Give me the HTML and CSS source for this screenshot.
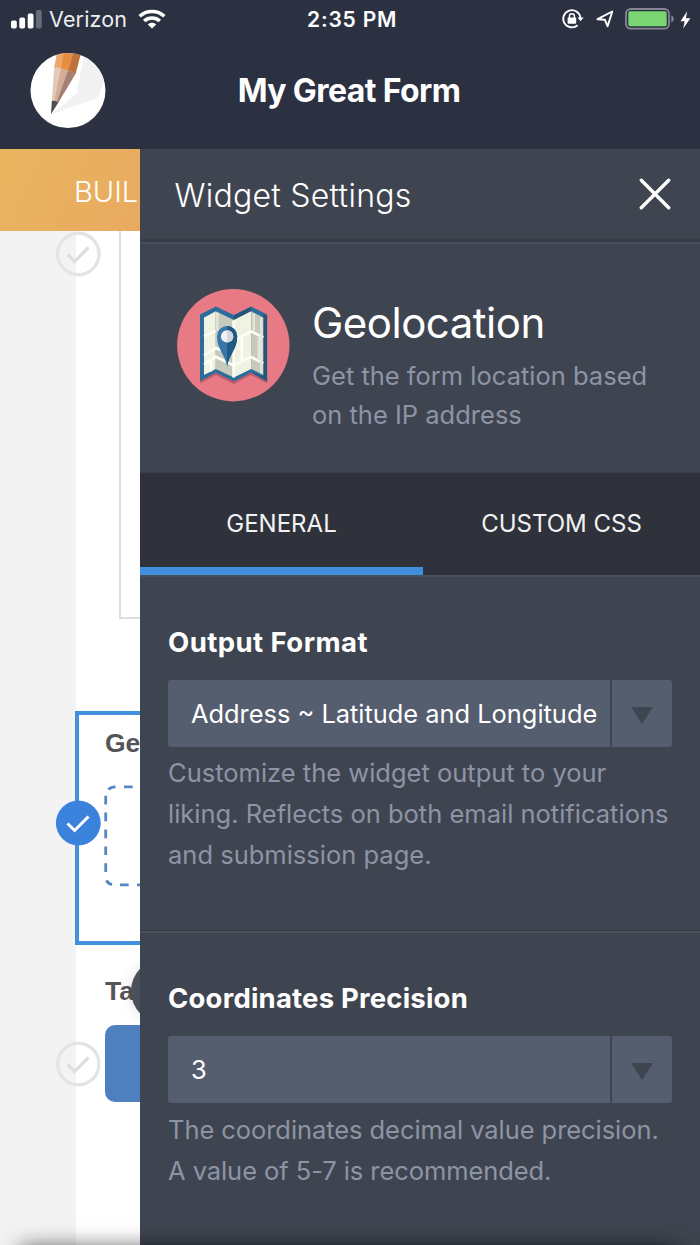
FILE: index.html
```html
<!DOCTYPE html>
<html lang="en">
<head>
<meta charset="utf-8">
<title>My Great Form</title>
<link rel="stylesheet" href="styles.css">
</head>
<body>
<div class="screen">
  <header class="top">
    <div class="status">
      <div class="status-left">
        <svg class="signal" width="32" height="20" viewBox="0 0 32 20">
          <rect x="0" y="11.500" width="5.800" height="8" rx="1.800" fill="#fff"/>
          <rect x="8.300" y="8.600" width="5.800" height="10.900" rx="1.800" fill="#fff"/>
          <rect x="16.700" y="4.600" width="5.800" height="14.900" rx="1.800" fill="#fff"/>
          <rect x="25" y="1" width="5.800" height="18.500" rx="1.800" fill="#686b78"/>
        </svg>
        <span class="carrier">Verizon</span>
        <svg class="wifi" width="28" height="20" viewBox="0 0 28 20" fill="none" stroke="#fff" stroke-width="3.600">
          <path d="M1.700 7.200C8.400 .9 19.600 .9 26.300 7.200"/>
          <path d="M6.200 12C10.400 8 17.600 8 21.800 12"/>
          <path d="M9.700 15.400C12 13.100 16 13.100 18.300 15.400L14 19.600Z" fill="#fff" stroke="none"/>
        </svg>
      </div>
      <span class="clock">2:35 PM</span>
      <div class="status-right">
        <svg class="lock" width="22" height="20" viewBox="0 0 22 20">
          <path d="M18.400 8.800A8.600 8.600 0 1 0 15.600 16.200" fill="none" stroke="#fff" stroke-width="1.900"/>
          <path d="M15.600 8.400H21.600L18.500 12.200Z" fill="#fff"/>
          <rect x="5.600" y="8.400" width="8.600" height="6.400" rx="1" fill="#fff"/>
          <path d="M7.400 9V7.200a2.500 2.500 0 0 1 5 0V9" fill="none" stroke="#fff" stroke-width="1.500"/>
        </svg>
        <svg class="arrow" width="18" height="18" viewBox="0 0 18 18">
          <path d="M1.500 9.200 16.300 1.500 11.600 16.300 8.900 9.700Z" fill="none" stroke="#fff" stroke-width="1.900" stroke-linejoin="round"/>
        </svg>
        <svg class="battery" width="50" height="22" viewBox="0 0 50 22">
          <rect x="1" y="1" width="43" height="19.600" rx="4.600" fill="none" stroke="#858894" stroke-width="1.800"/>
          <rect x="3.300" y="3.300" width="38.400" height="15" rx="1.800" fill="#7ad673"/>
          <path d="M46.300 7.300c3.200 1.300 3.200 6 0 7.300z" fill="#858894"/>
        </svg>
        <svg class="bolt" width="11" height="18" viewBox="0 0 11 18">
          <path d="M7.200 .3.500 10.200H4.700L3.200 17.600 10.400 7.200H5.900Z" fill="#fff"/>
        </svg>
      </div>
    </div>
    <div class="titlebar">
      <svg class="logo" width="76" height="76" viewBox="0 0 76 76">
        <defs><clipPath id="disc"><circle cx="38" cy="37.500" r="37.500"/></clipPath></defs>
        <g clip-path="url(#disc)">
          <rect width="76" height="76" fill="#fff"/>
          <path d="M53.500 4 47 40 22 61 68.500 44.500 76 20 56 0Z" fill="#f1f1f2"/>
          <path d="M24.300 14 21.800 48.500 23.700 50 31 14.500Z" fill="#e4c8b8"/>
          <path d="M31 14.500 23.500 50 26.500 49 38 17Z" fill="#d3ad98"/>
          <path d="M38 17 26.500 49 28.300 49.800 45.700 20.500Z" fill="#a58070"/>
          <path d="M21.800 48 21 61.200 28.300 49.500Q25 47 21.800 48Z" fill="#4b4e4f"/>
          <path d="M27 0 24.200 14.200 31 15 35 0Z" fill="#eba768"/>
          <path d="M34 0 30.800 14.900 38.500 17.500 43 0Z" fill="#e78d42"/>
          <path d="M43 0 38.300 17.300 45.700 20.800 51 0Z" fill="#bd733b"/>
        </g>
      </svg>
      <h1 class="title">My Great Form</h1>
    </div>
  </header>

  <main class="main">
    <section class="builder">
      <div class="build-tab">BUIL</div>
      <div class="canvas">
        <div class="field field-text">
          <svg class="check" width="46" height="46" viewBox="0 0 46 46" fill="none"><circle cx="23.300" cy="23" r="20.700" stroke="#e4e4e4" stroke-width="3.400"/><path d="M12.500 23.500 19.600 30.500 33.500 16.500" stroke="#dedede" stroke-width="3.200"/></svg>
        </div>
        <div class="field field-geo">
          <div class="label">Ge</div>
          <svg class="dashed" width="60" height="102" viewBox="0 0 60 102" fill="none" stroke="#5485c4" stroke-width="2.800"><path d="M1.700 91V10" stroke-dasharray="8.700 8.200" stroke-dashoffset="-4"/><path d="M4.500 4.500Q7 1.800 11.500 1.800M20 1.800H28.700M2.500 95.500Q4 98.500 8 99.700M16 99.800H24.700M33 99.800H42"/></svg>
          <svg class="check" width="46" height="46" viewBox="0 0 46 46" fill="none"><circle cx="23.300" cy="23" r="22.400" fill="#3b82dc"/><path d="M12.500 23.500 19.600 30.500 33.500 16.500" stroke="#fff" stroke-width="3"/></svg>
        </div>
        <div class="field field-take">
          <div class="label">Ta</div>
          <div class="photo-button"></div>
          <div class="knob"></div>
          <svg class="check" width="46" height="46" viewBox="0 0 46 46" fill="none"><circle cx="23.300" cy="23" r="20.700" stroke="#e4e4e4" stroke-width="3.400"/><path d="M12.500 23.500 19.600 30.500 33.500 16.500" stroke="#dedede" stroke-width="3.200"/></svg>
        </div>
      </div>
    </section>

    <aside class="panel">
      <div class="panel-head">
        <h2 class="panel-title">Widget Settings</h2>
        <svg class="close" width="32" height="32" viewBox="0 0 32 32"><path d="M2.300 2.300 29.700 29.700M29.700 2.300 2.300 29.700" stroke="#fff" stroke-width="3.400" stroke-linecap="round"/></svg>
      </div>
      <div class="widget">
        <svg class="map" width="114" height="114" viewBox="0 0 114 114">
          <circle cx="57.300" cy="57.200" r="56.200" fill="#e77a84"/>
          <g transform="translate(.8 .4)">
          <path d="M23.500 91 39 83.500 57 92.500 74 83.500 90.500 91V95L74 86.500 57 95.500 39 86.500 23.500 95Z" fill="#b95d6d"/>
          <path d="M23.200 26.200 39 18.200 57 26.700 74.300 18.200 90.300 26.200V92.800L74.300 84 57 92.800 39 84 23.200 92.800Z" fill="#2a6c9b"/>
          <path d="M57 27 74.300 18.500V26L57 32ZM74.300 84 90.300 92.800V27L86.500 26V88Z" fill="#235679"/>
          <path d="M27.200 29.200 39 22.800V80.500L27.200 86.500Z" fill="#f0f3e1"/>
          <path d="M39 22.800 57 31.500V89L39 80.500Z" fill="#c7cabb"/>
          <path d="M57 31.500 74.300 22.800V80.500L57 89Z" fill="#f0f3e1"/>
          <path d="M74.300 22.800 86.500 29.200V86.500L74.300 80.500Z" fill="#c7cabb"/>
          <path d="M27.200 48 39 42.500M57 52 74.300 43 86.500 49M27.200 67 39 59.500 45 62M27.200 76 39 68.500 57 77 74.300 68.500 86.500 75M65 47V73M34 72V83M56.800 32V89" fill="none" stroke="#fdfef7" stroke-width="2.700"/>
          <path d="M40.500 24V42M77 25V43M82 48V72M84.500 29V85" fill="none" stroke="#e3e5d5" stroke-width="2.500"/>
          <path d="M50.300 78C48 65 40.200 61 40.200 48A10.100 10.300 0 0 1 60.400 48C60.400 61 52.600 65 50.300 78Z" fill="#3477a8"/>
          <path d="M50.300 78C52.600 65 60.400 61 60.400 48A10.100 10.300 0 0 0 50.300 37.700Z" fill="#205a83"/>
          <circle cx="50.300" cy="48" r="6.200" fill="#f1f1f4"/>
          <path d="M50.300 41.800a6.200 6.200 0 0 1 0 12.400z" fill="#d4d5dc"/>
          </g>
        </svg>
        <div class="widget-text">
          <h3 class="widget-name">Geolocation</h3>
          <p class="widget-desc">Get the form location based<br>on the IP address</p>
        </div>
      </div>
      <nav class="tabs">
        <div class="tab active">GENERAL</div>
        <div class="tab">CUSTOM CSS</div>
      </nav>
      <div class="setting">
        <h4 class="setting-title">Output Format</h4>
        <div class="select">
          <div class="value">Address ~ Latitude and Longitude</div>
          <div class="drop"><svg width="22" height="17" viewBox="0 0 22 17"><path d="M0 0H22L11 17Z" fill="#3f4550"/></svg></div>
        </div>
        <p class="help">Customize the widget output to your<br>liking. Reflects on both email notifications<br>and submission page.</p>
      </div>
      <div class="setting second">
        <h4 class="setting-title">Coordinates Precision</h4>
        <div class="select">
          <div class="value">3</div>
          <div class="drop"><svg width="22" height="17" viewBox="0 0 22 17"><path d="M0 0H22L11 17Z" fill="#3f4550"/></svg></div>
        </div>
        <p class="help">The coordinates decimal value precision.<br>A value of 5-7 is recommended.</p>
      </div>
    </aside>
  </main>
  <div class="bottom-shadow"></div>
</div>
</body>
</html>
```
FILE: styles.css
```css
* { box-sizing: border-box; }
body { margin: 0; font-family: Inter, "Liberation Sans", sans-serif; }
h1, h2, h3, h4, p { margin: 0; font-weight: 400; }
svg { display: block; flex: none; }
.screen { position: relative; width: 700px; height: 1245px; overflow: hidden; white-space: nowrap; }

.top { height: 149px; background: #2c3142; color: #fff; }
.status { display: grid; grid-template-columns: 1fr 92px 1fr; height: 39px; align-items: center; }
.status-left { display: flex; align-items: center; padding-left: 11px; }
.signal { margin-top: -2px; }
.carrier { width: 78px; margin-left: 6px; font-size: 21.500px; line-height: 39px; color: #eeeef0; letter-spacing: .15px; }
.wifi { margin: -2px 0 0 11px; }
.clock { font-size: 21px; font-weight: 600; line-height: 39px; padding-left: 3px; text-align: center; letter-spacing: .8px; }
.status-right { display: flex; align-items: center; justify-content: flex-end; padding-right: 9px; }
.lock, .arrow, .battery { position: relative; top: -.5px; }
.arrow { margin-left: 12px; }
.battery { margin-left: 11px; }
.bolt { margin-left: 5px; }
.titlebar { display: grid; grid-template-columns: 76px 1fr 76px; padding: 12px 30px 0; align-items: center; }
.title { font-size: 32px; font-weight: 700; line-height: 79px; text-align: center; padding-right: 2px; letter-spacing: -.6px; }

.main { display: grid; grid-template-columns: 140px 560px; height: 1096px; }
.builder { overflow: hidden; background: #fff; }
.build-tab { height: 82px; padding-left: 74px; font-size: 29px; font-weight: 300; line-height: 85px; color: #fff; background: linear-gradient(115deg, #e9b560, #e9aa60); }
.canvas { height: 1014px; padding-left: 75px; background: linear-gradient(90deg, #f3f3f3 76px, #fff 76px); }
.field { position: relative; }
.check { position: absolute; left: -20px; }
.field-text { height: 387px; margin-bottom: 93px; }
.field-text::before { content: ""; display: block; height: 386px; margin-left: 44px; border: solid #dedede; border-width: 0 0 2px 2px; }
.field-text .check { top: 0; }
.field-geo { height: 234px; border: 4px solid #4490dc; border-right: 0; padding: 13px 0 0 26px; }
.field-geo .check { top: 85px; left: -24px; }
.label { font-family: "Liberation Sans", sans-serif; font-size: 26.500px; font-weight: 700; line-height: 30px; color: #555; }
.dashed { margin: 27px 0 0 -1px; }
.field-take { padding: 31px 0 0 30px; }
.photo-button { height: 77px; margin: 19px 0 0 -.5px; border-radius: 10px 0 0 10px; background: #4e7fbe; }
.knob { position: absolute; left: 56px; top: 14px; width: 64px; height: 64px; border-radius: 50%; background: #4a515a; box-shadow: 0 0 14px rgba(0,0,0,.12); }
.field-take .check { top: 96px; }

.panel { background: #3f4550; color: #fff; }
.panel-head { display: flex; justify-content: space-between; height: 93px; padding: 0 29px 0 34.500px; border-bottom: 3px solid #373c46; }
.panel-title { font-size: 32px; font-weight: 300; line-height: 94px; letter-spacing: .25px; }
.close { margin-top: 29px; }
.widget { display: flex; height: 231px; padding: 46px 0 0 36px; border-top: 2px solid #484f5c; border-bottom: 1px solid #393e48; }
.map { margin-top: -2px; }
.widget-text { padding-left: 22px; }
.widget-name { font-size: 42px; font-weight: 400; line-height: 50px; margin-top: 8px; letter-spacing: -.5px; }
.widget-desc { margin-top: 8px; font-size: 25.500px; line-height: 39px; color: #8d94a5; }
.tabs { display: grid; grid-template-columns: 283px 277px; height: 102px; background: #2f323a; }
.tab { height: 102px; border-bottom: 8px solid transparent; font-size: 24px; line-height: 101px; text-align: center; color: #f2f2f4; }
.active { border-bottom-color: #408fdc; }
.setting { height: 356px; padding: 45px 28px 0; border-top: 2px solid #484f5b; border-bottom: 1px solid #343944; }
.setting-title { font-size: 27.500px; font-weight: 700; line-height: 40px; letter-spacing: .45px; }
.select { display: grid; grid-template-columns: 442px 60px; gap: 2px; height: 67px; margin-top: 18px; }
.value { padding-left: 23px; border-radius: 3px 0 0 3px; background: #555e6f; font-size: 25.400px; line-height: 67px; }
.drop { display: flex; align-items: center; justify-content: center; padding-top: 4px; background: #555e6f; border-radius: 0 3px 3px 0; }
.help { margin-top: 5px; font-size: 25.500px; line-height: 41px; color: #8d94a5; }
.second { height: 314px; border-bottom: 0; }
.second .setting-title { letter-spacing: .2px; }
.second .help { margin-top: 6px; letter-spacing: -.07px; }
.bottom-shadow { position: absolute; left: 20px; right: 20px; top: 1248px; height: 30px; box-shadow: 0 0 22px rgba(0,0,0,.7); }
```
